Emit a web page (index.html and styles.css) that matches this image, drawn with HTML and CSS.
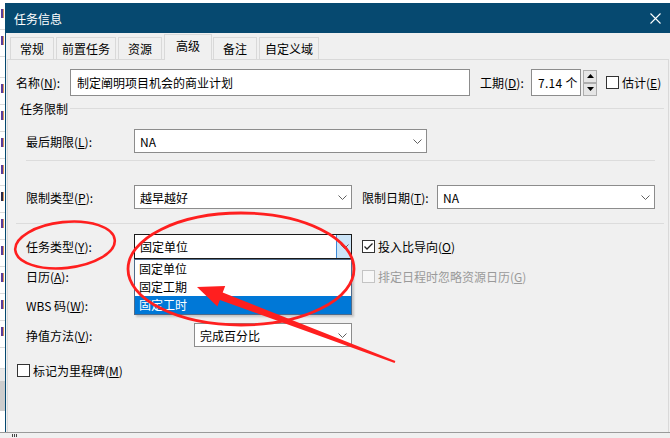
FILE: index.html
```html
<!DOCTYPE html>
<html>
  <head>
    <meta charset="utf-8">
    <title>任务信息</title>
    <link rel="stylesheet" href="styles.css">
  </head>
  <body>
    <div class="desk">
      <div class="sheet-top"></div>
      <div class="desk-main">
        <!-- the project sheet behind the dialog, only its edge shows -->
        <div class="sheet-left">
          <div class="cell"><i class="frag"></i></div>
          <div class="cell"><i class="frag"></i></div>
          <div class="cell"></div>
          <div class="cell"><i class="frag"></i></div>
          <div class="cell"><i class="frag"></i></div>
          <div class="cell"><i class="frag"></i></div>
          <div class="cell"><i class="frag"></i></div>
          <div class="cell"><i class="frag frag-dark"></i></div>
          <div class="cell"><i class="frag"></i></div>
          <div class="cell"><i class="frag"></i></div>
          <div class="cell"><i class="frag"></i></div>
          <div class="cell"><i class="frag"></i></div>
          <div class="cell"><i class="frag"></i></div>
          <div class="cell"></div>
          <div class="sheet-gap"></div>
          <div class="sheet-bar"></div>
        </div>

        <div class="dialog">
          <div class="titlebar">
            <span>任务信息</span>
            <svg class="close" width="11" height="11" viewBox="0 0 11 11">
              <path d="M0.5 0.5 L10.5 10.5 M10.5 0.5 L0.5 10.5" stroke="#fff" stroke-width="1.1" fill="none"/>
            </svg>
          </div>

          <div class="tabs">
            <div class="tab">常规</div>
            <div class="tab">前置任务</div>
            <div class="tab">资源</div>
            <div class="tab active">高级</div>
            <div class="tab">备注</div>
            <div class="tab">自定义域</div>
          </div>

          <div class="panel">
            <div class="row row-name">
              <label class="lbl lbl-name">名称(<u>N</u>):</label>
              <div class="field field-name">制定阐明项目机会的商业计划</div>
              <label class="lbl lbl-dur">工期(<u>D</u>):</label>
              <div class="field field-dur">7.14 个</div>
              <div class="spin">
                <div class="spin-btn"><svg width="7" height="4" viewBox="0 0 7 4"><path d="M3.5 0 L7 4 L0 4 Z" fill="#000"/></svg></div>
                <div class="spin-btn"><svg width="7" height="4" viewBox="0 0 7 4"><path d="M0 0 L7 0 L3.5 4 Z" fill="#000"/></svg></div>
              </div>
              <span class="check check-est"></span>
              <label class="check-lbl">估计(<u>E</u>)</label>
            </div>

            <div class="group">
              <span class="group-title">任务限制</span>
              <span class="group-line"></span>
            </div>

            <div class="row row-deadline">
              <label class="lbl lbl-wide">最后期限(<u>L</u>):</label>
              <div class="field combo combo-long">
                <span class="combo-text">NA</span>
                <svg class="chev" width="9" height="5" viewBox="0 0 9 5"><polyline points="0.5,0.5 4.5,4.5 8.5,0.5" fill="none" stroke="#606060"/></svg>
              </div>
            </div>

            <div class="sep"></div>

            <div class="row row-constraint">
              <label class="lbl lbl-wide">限制类型(<u>P</u>):</label>
              <div class="field combo combo-mid">
                <span class="combo-text">越早越好</span>
                <svg class="chev" width="9" height="5" viewBox="0 0 9 5"><polyline points="0.5,0.5 4.5,4.5 8.5,0.5" fill="none" stroke="#606060"/></svg>
              </div>
              <label class="lbl lbl-date">限制日期(<u>T</u>):</label>
              <div class="field combo combo-mid">
                <span class="combo-text">NA</span>
                <svg class="chev" width="9" height="5" viewBox="0 0 9 5"><polyline points="0.5,0.5 4.5,4.5 8.5,0.5" fill="none" stroke="#606060"/></svg>
              </div>
            </div>

            <div class="sep sep-wide"></div>

            <div class="row row-type">
              <label class="lbl lbl-wide">任务类型(<u>Y</u>):</label>
              <div class="field combo combo-mid combo-open">
                <span class="combo-text">固定单位</span>
                <span class="combo-btn">
                  <svg width="9" height="5" viewBox="0 0 9 5"><polyline points="0.5,0.5 4.5,4.5 8.5,0.5" fill="none" stroke="#606060"/></svg>
                </span>
              </div>
              <span class="check check-right checked">
                <svg width="11" height="11" viewBox="0 0 11 11"><polyline points="1.5,5.5 4,8 9.5,2.5" fill="none" stroke="#222" stroke-width="1.3"/></svg>
              </span>
              <label class="check-lbl">投入比导向(<u>O</u>)</label>
            </div>

            <div class="row row-cal">
              <label class="lbl lbl-long">日历(<u>A</u>):</label>
              <div class="field combo combo-short">
                <span class="combo-text">无</span>
              </div>
              <span class="check check-right disabled"></span>
              <label class="check-lbl disabled">排定日程时忽略资源日历(<u>G</u>)</label>
            </div>

            <div class="row row-wbs">
              <label class="lbl lbl-long">WBS 码(<u>W</u>):</label>
            </div>

            <div class="row row-ev">
              <label class="lbl lbl-long">挣值方法(<u>V</u>):</label>
              <div class="field combo combo-short">
                <span class="combo-text">完成百分比</span>
                <svg class="chev" width="9" height="5" viewBox="0 0 9 5"><polyline points="0.5,0.5 4.5,4.5 8.5,0.5" fill="none" stroke="#606060"/></svg>
              </div>
            </div>

            <div class="row row-mile">
              <span class="check"></span>
              <label class="check-lbl">标记为里程碑(<u>M</u>)</label>
            </div>

            <!-- open list of the task type combo -->
            <div class="droplist">
              <div class="drop-item">固定单位</div>
              <div class="drop-item">固定工期</div>
              <div class="drop-item selected">固定工时</div>
            </div>
          </div>
        </div>
      </div>
      <div class="statusbar"><i class="grip"></i></div>

      <!-- red marks drawn over the screenshot -->
      <svg class="marks" width="670" height="438" viewBox="0 0 670 438">
        <ellipse cx="65" cy="245" rx="50" ry="23" transform="rotate(-6 65 245)" fill="none" stroke="#ff1f1f" stroke-width="2.6"/>
        <ellipse cx="241" cy="269" rx="113" ry="56" fill="none" stroke="#ff1f1f" stroke-width="2.8"/>
        <polygon points="197,287 225.2,285.9 222.7,292.5 395.4,361.1 394.6,362.9 219.9,299.9 217.4,306.5" fill="#ff1f1f"/>
      </svg>
    </div>
  </body>
</html>
```

FILE: styles.css
```css
body {
  margin: 0;
  font-family: "Noto Sans CJK SC", "Noto Sans", sans-serif;
  font-size: 12px;
  color: #000;
}

.desk {
  position: relative;
  width: 670px;
  height: 438px;
  overflow: hidden;
  background: #fff;
}

/* the sheet behind the dialog */
.sheet-top {
  height: 3px;
  background: #fff;
}
.desk-main {
  display: flex;
  height: 429px;
}
.sheet-left {
  width: 5px;
  flex: none;
  overflow: hidden;
  background: #fff;
}
.cell {
  height: 20px;
  border-bottom: 1px solid #dcdcdc;
}
.frag {
  display: block;
  width: 2px;
  height: 9px;
  margin: 6px 0 0 1px;
  background: #5a3c9a;
  box-shadow: 1px 0 0 #d89a5a;
}
.frag-dark {
  background: #2a2a4a;
}
.sheet-gap {
  height: 12px;
  background: #e8e8e8;
}
.sheet-bar {
  height: 30px;
  background: #cdcdcd;
}

/* dialog */
.dialog {
  flex: 1;
  display: flex;
  flex-direction: column;
  border-left: 1px solid #064970;
  background: #f0f0f0;
}
.titlebar {
  height: 30px;
  flex: none;
  display: flex;
  align-items: center;
  justify-content: space-between;
  padding: 0 9px 0 8px;
  background: #064970;
  color: #fff;
}

/* tabs */
.tabs {
  height: 26px;
  flex: none;
  display: flex;
  align-items: flex-end;
  padding-left: 4px;
  position: relative;
  z-index: 1;
}
.tab {
  box-sizing: border-box;
  height: 22px;
  min-width: 44px;
  padding: 0 5px;
  margin-right: 2px;
  border: 1px solid #d9d9d9;
  border-bottom: none;
  display: flex;
  align-items: center;
  justify-content: center;
  background: #f0f0f0;
}
.tab.active {
  height: 26px;
  min-width: 48px;
  margin-right: 1px;
  margin-bottom: -1px;
  padding-bottom: 4px;
}

.panel {
  flex: 1;
  position: relative;
  margin: 0 1px;
  border: 1px solid #d9d9d9;
  border-bottom: none;
}

/* rows */
.row {
  display: flex;
  align-items: center;
  height: 24px;
  padding-left: 18px;
}
.lbl {
  flex: none;
  white-space: nowrap;
}
.lbl-wide {
  width: 108px;
}
.lbl-long {
  width: 168px;
}
.field {
  box-sizing: border-box;
  height: 100%;
  flex: none;
  display: flex;
  align-items: center;
  padding: 0 6px;
  border: 1px solid #8c8c8c;
  background: #fff;
  white-space: nowrap;
  overflow: hidden;
}

.row-name {
  margin-top: 9px;
  height: 27px;
  padding-left: 8px;
}
.lbl-name {
  width: 54px;
}
.field-name {
  width: 400px;
}
.lbl-dur {
  width: 51px;
  margin-left: 10px;
}
.field-dur {
  width: 50px;
  padding: 0 0 0 6px;
  letter-spacing: 0.3px;
}
.spin {
  width: 14px;
  height: 26px;
  margin-left: 2px;
  display: flex;
  flex-direction: column;
}
.spin-btn {
  box-sizing: border-box;
  height: 13px;
  border: 1px solid #adadad;
  background: #e5e5e5;
  display: flex;
  align-items: center;
  justify-content: center;
}

.check {
  box-sizing: border-box;
  width: 13px;
  height: 13px;
  flex: none;
  border: 1px solid #333;
  background: #fff;
  display: flex;
  align-items: center;
  justify-content: center;
}
.check-est {
  margin-left: 9px;
}
.check-right {
  margin-left: 10px;
}
.check.disabled {
  border-color: #c4c4c4;
  background: #f7f7f7;
}
.check-lbl {
  margin-left: 3px;
  white-space: nowrap;
}
.check-lbl.disabled {
  color: #9a9a9a;
}

/* group header "任务限制" */
.group {
  display: flex;
  align-items: center;
  height: 18px;
  margin-top: 4px;
  padding: 0 4px 0 12px;
}
.group-title {
  margin-right: 2px;
  margin-bottom: 1px;
}
.group-line {
  flex: 1;
  margin-bottom: 1px;
  border-top: 1px solid #dcdcdc;
}
.sep {
  margin: 7px 13px 0 18px;
  border-top: 1px solid #dcdcdc;
}
.sep-wide {
  margin: 14px 4px 0 8px;
}

/* combos */
.combo {
  padding: 0 4px 0 5px;
}
.combo-text {
  flex: 1;
}
.combo-long {
  width: 293px;
}
.combo-mid {
  width: 218px;
}
.combo-short {
  width: 158px;
}
.combo-open {
  padding-right: 0;
  border-color: #1a1a1a;
}
.combo-btn {
  box-sizing: border-box;
  width: 15px;
  height: 100%;
  display: flex;
  align-items: center;
  justify-content: center;
  background: #cce4f7;
  border-left: 1px solid #3c8ad8;
}
.lbl-date {
  width: 75px;
  margin-left: 10px;
}

.row-deadline {
  margin-top: 11px;
}
.row-constraint {
  margin-top: 24px;
}
.row-type {
  margin-top: 10px;
  height: 25px;
}
.row-cal {
  margin-top: 5px;
}
.row-wbs {
  margin-top: 5px;
}
.row-ev {
  margin-top: 6px;
}
.row-mile {
  margin-top: 13px;
  height: 21px;
  padding-left: 9px;
}

/* opened list */
.droplist {
  position: absolute;
  left: 126px;
  top: 199px;
  box-sizing: border-box;
  width: 218px;
  height: 56px;
  border: 1px solid #4f6b8a;
  background: #fff;
  box-shadow: 2px 2px 2px rgba(0, 0, 0, 0.18);
}
.drop-item {
  height: 18px;
  line-height: 18px;
  padding-left: 4px;
}
.drop-item.selected {
  background: #0078d7;
  color: #fff;
}

.statusbar {
  box-sizing: border-box;
  height: 6px;
  border-top: 1px solid #9a9a9a;
  background: #f0f0f0;
  padding: 1px 0 0 12px;
}
.grip {
  display: block;
  width: 6px;
  height: 3px;
  background: repeating-linear-gradient(90deg, #444 0 1px, transparent 1px 2px);
}

.marks {
  position: absolute;
  left: 0;
  top: 0;
  pointer-events: none;
}
```
